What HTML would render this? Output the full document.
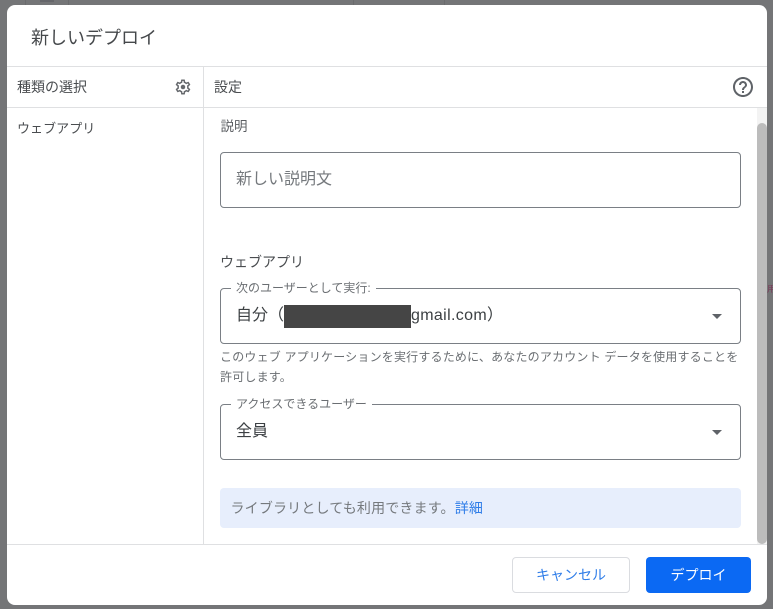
<!DOCTYPE html>
<html lang="ja"><head><meta charset="utf-8">
<style>
html,body{margin:0;padding:0;width:773px;height:609px;overflow:hidden;background:#747577}
body{position:relative;font-family:"Liberation Sans","Noto Sans CJK JP",sans-serif;color:#4a4d50}
.a{position:absolute;white-space:nowrap;line-height:1}
.l{position:absolute;background:#dfe0e2}
.box{position:absolute;border:1px solid #7a7f85;border-radius:4px;box-sizing:border-box;background:#fff}
.tri{position:absolute;width:0;height:0;border-left:5.5px solid transparent;border-right:5.5px solid transparent;border-top:5px solid #5f6368}
</style></head><body>
<div class="l" style="left:25px;top:0;width:1px;height:5px;background:#6a6b6d"></div>
<div class="l" style="left:40px;top:0;width:14px;height:2px;background:#65666a"></div>
<div class="l" style="left:68px;top:0;width:1px;height:5px;background:#6a6b6d"></div>
<div class="l" style="left:353px;top:0;width:1px;height:5px;background:#6a6b6d"></div>
<div class="l" style="left:444px;top:0;width:1px;height:5px;background:#6a6b6d"></div>
<div class="a" style="left:767px;top:285px;font-size:9px;color:#7a3a5a;width:6px;overflow:hidden">用</div>

<div style="position:absolute;left:7px;top:5px;width:760px;height:600px;background:#fff;border-radius:8px;overflow:hidden">
 <div class="a" style="left:24px;top:24px;font-size:18px;color:#45484b">新しいデプロイ</div>
 <div class="l" style="left:0;top:61px;width:760px;height:1px"></div>
 <div class="l" style="left:0;top:102px;width:760px;height:1px"></div>
 <div class="l" style="left:196px;top:61px;width:1px;height:479px"></div>
 <div class="l" style="left:0;top:539px;width:760px;height:1px"></div>

 <div class="a" style="left:10px;top:75px;font-size:14px">種類の選択</div>
 <svg style="position:absolute;left:167px;top:73px" width="18" height="18" viewBox="0 0 24 24"><path fill="#66696d" fill-rule="evenodd" d="M19.43 12.98c.04-.32.07-.64.07-.98s-.03-.66-.07-.98l2.11-1.65c.19-.15.24-.42.12-.64l-2-3.46c-.12-.22-.39-.3-.61-.22l-2.49 1c-.52-.4-1.08-.73-1.69-.98l-.38-2.65C14.46 2.18 14.25 2 14 2h-4c-.25 0-.46.18-.49.42l-.38 2.65c-.61.25-1.17.59-1.69.98l-2.49-1c-.23-.09-.49 0-.61.22l-2 3.46c-.13.22-.07.49.12.64l2.11 1.65c-.04.32-.07.65-.07.98s.03.66.07.98l-2.11 1.65c-.19.15-.24.42-.12.64l2 3.46c.12.22.39.3.61.22l2.49-1c.52.4 1.08.73 1.69.98l.38 2.65c.03.24.24.42.49.42h4c.25 0 .46-.18.49-.42l.38-2.65c.61-.25 1.17-.59 1.69-.98l2.49 1c.23.09.49 0 .61-.22l2-3.46c.12-.22.07-.49-.12-.64l-2.11-1.65zM17.45 11.27c.04.31.05.52.05.73s-.02.43-.05.73l-.14 1.13.89.7 1.08.84-.7 1.21-1.27-.51-1.04-.42-.9.68c-.43.32-.84.56-1.25.73l-1.06.43-.16 1.13-.2 1.35h-1.4l-.19-1.35-.16-1.13-1.06-.43c-.43-.18-.83-.41-1.23-.71l-.91-.7-1.06.43-1.27.51-.7-1.21 1.08-.84.89-.7-.14-1.13c-.03-.31-.05-.54-.05-.74s.02-.43.05-.73l.14-1.13-.89-.7-1.08-.84.7-1.21 1.27.51 1.04.42.9-.68c.43-.32.84-.56 1.25-.73l1.06-.43.16-1.13.2-1.35h1.39l.19 1.35.16 1.13 1.06.43c.43.18.83.41 1.23.71l.91.7 1.06-.43 1.27-.51.7 1.21-1.07.85-.89.7.14 1.13z"/><circle cx="12" cy="12" r="3" fill="#66696d"/></svg>
 <div class="a" style="left:10px;top:117px;font-size:13px;letter-spacing:.05px">ウェブアプリ</div>

 <div class="a" style="left:207px;top:75px;font-size:14px">設定</div>
 <svg style="position:absolute;left:724px;top:70px" width="24" height="24" viewBox="0 0 24 24"><path fill="#5f6368" d="M11 18h2v-2h-2v2zm1-16C6.48 2 2 6.48 2 12s4.48 10 10 10 10-4.48 10-10S17.52 2 12 2zm0 18c-4.41 0-8-3.59-8-8s3.59-8 8-8 8 3.59 8 8-3.59 8-8 8zm0-14c-2.21 0-4 1.79-4 4h2c0-1.1.9-2 2-2s2 .9 2 2c0 2-3 1.75-3 5h2c0-2.25 3-2.5 3-5 0-2.21-1.79-4-4-4z"/></svg>

 <div class="a" style="left:213.5px;top:115px;font-size:13.5px;color:#5a5d61">説明</div>
 <div class="box" style="left:213px;top:147px;width:521px;height:56px"></div>
 <div class="a" style="left:229px;top:167px;font-size:16px;color:#75797d">新しい説明文</div>

 <div class="a" style="left:213px;top:249.5px;font-size:14px">ウェブアプリ</div>

 <div class="box" style="left:213px;top:283px;width:521px;height:56px"></div>
 <div class="a" style="left:224px;top:277px;font-size:12px;background:#fff;padding:0 5px;color:#6a6e72">次のユーザーとして実行:</div>
 <div class="a" style="left:229px;top:303px;font-size:16px;color:#3c4043">自分（</div>
 <div style="position:absolute;left:277px;top:300px;width:127px;height:23px;background:#454545"></div>
 <div class="a" style="left:404px;top:303px;font-size:16px;color:#3c4043;letter-spacing:.35px">gmail.com）</div>
 <div class="tri" style="left:704.5px;top:309px"></div>
 <div class="a" style="left:213px;top:346px;font-size:12px;color:#6a6e72;letter-spacing:.19px">このウェブ アプリケーションを実行するために、あなたのアカウント データを使用することを</div>
 <div class="a" style="left:213px;top:366px;font-size:12px;color:#6a6e72;letter-spacing:.19px">許可します。</div>

 <div class="box" style="left:213px;top:399px;width:521px;height:56px"></div>
 <div class="a" style="left:224px;top:393px;font-size:12px;background:#fff;padding:0 5px;color:#6a6e72">アクセスできるユーザー</div>
 <div class="a" style="left:229px;top:419px;font-size:16px;color:#3c4043">全員</div>
 <div class="tri" style="left:704.5px;top:425px"></div>

 <div style="position:absolute;left:213px;top:483px;width:521px;height:40px;background:#e7eefc;border-radius:4px"></div>
 <div class="a" style="left:223.5px;top:496px;font-size:14px;letter-spacing:.17px;color:#75797d">ライブラリとしても利用できます。<span style="color:#2f7de8">詳細</span></div>

 <div style="position:absolute;left:750px;top:103px;width:10px;height:436px;background:#f3f3f3"></div>
 <div style="position:absolute;left:750px;top:118px;width:10px;height:421px;background:#bcbcbc;border-radius:5px"></div>

 <div style="position:absolute;left:505px;top:552px;width:118px;height:36px;box-sizing:border-box;border:1px solid #dadce0;border-radius:4px;background:#fff;color:#2f7de8;font-size:14px;line-height:34px;text-align:center">キャンセル</div>
 <div style="position:absolute;left:639px;top:552px;width:105px;height:36px;border-radius:4px;background:#0b69f3;color:#fff;font-size:14px;line-height:36px;text-align:center">デプロイ</div>
</div>
</body></html>
